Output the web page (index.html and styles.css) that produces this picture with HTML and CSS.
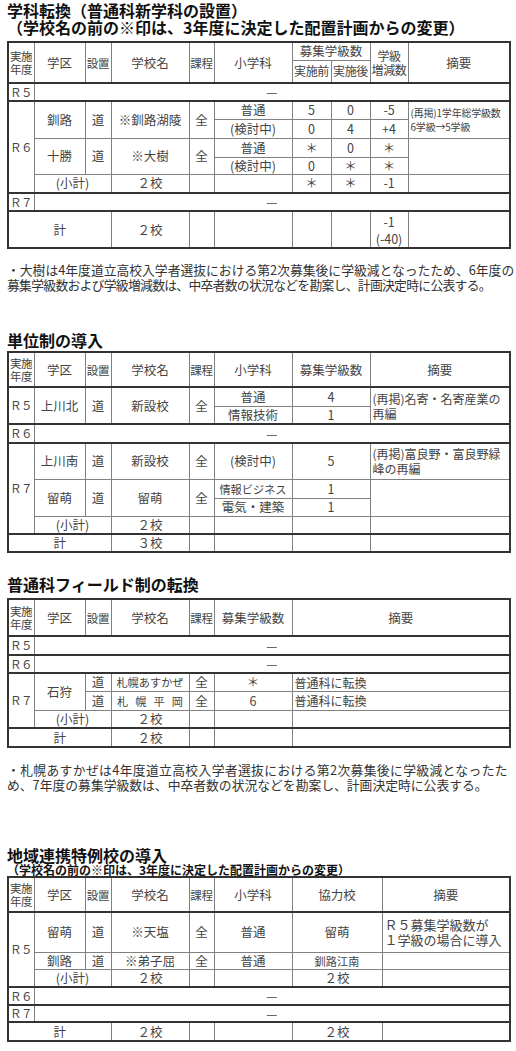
FILE: index.html
```html
<!DOCTYPE html>
<html lang="ja">
<head>
<meta charset="utf-8">
<title>配置計画</title>
<link rel="stylesheet" href="styles.css">
</head>
<body>
<div class="page">
  <h2 class="title">学科転換（普通科新学科の設置）<br>（学校名の前の※印は、3年度に決定した配置計画からの変更）</h2>
  <table class="t t1">
    <colgroup>
      <col class="w26"><col class="w51"><col class="w26"><col class="w78"><col class="w25"><col class="w78"><col class="w39"><col class="w39"><col class="w38"><col class="w102">
    </colgroup>
    <tr class="h18">
      <th rowspan="2" class="yr">実施<br>年度</th>
      <th rowspan="2">学区</th>
      <th rowspan="2" class="nw">設置</th>
      <th rowspan="2">学校名</th>
      <th rowspan="2" class="nw">課程</th>
      <th rowspan="2">小学科</th>
      <th colspan="2">募集学級数</th>
      <th rowspan="2" class="sm">学級<br>増減数</th>
      <th rowspan="2">摘要</th>
    </tr>
    <tr class="h23"><th class="sm">実施前</th><th class="sm">実施後</th></tr>
    <tr class="g h18"><td class="yr">Ｒ５</td><td colspan="9">—</td></tr>
    <tr class="g h18">
      <td rowspan="5" class="yr">Ｒ６</td>
      <td rowspan="2">釧路</td><td rowspan="2">道</td><td rowspan="2">※釧路湖陵</td><td rowspan="2">全</td>
      <td>普通</td><td>5</td><td>0</td><td>-5</td>
      <td rowspan="2" class="memo xs">(再掲)1学年総学級数<br>6学級→5学級</td>
    </tr>
    <tr class="h19"><td>(検討中)</td><td>0</td><td>4</td><td>+4</td></tr>
    <tr class="h19">
      <td rowspan="2">十勝</td><td rowspan="2">道</td><td rowspan="2">※大樹</td><td rowspan="2">全</td>
      <td>普通</td><td>＊</td><td>0</td><td>＊</td>
      <td rowspan="2"></td>
    </tr>
    <tr class="h17"><td>(検討中)</td><td>0</td><td>＊</td><td>＊</td></tr>
    <tr class="h19"><td colspan="2">(小計)</td><td>２校</td><td></td><td></td><td>＊</td><td>＊</td><td>-1</td><td></td></tr>
    <tr class="g h18"><td class="yr">Ｒ７</td><td colspan="9">—</td></tr>
    <tr class="g h37"><td colspan="3">計</td><td>２校</td><td></td><td></td><td></td><td></td><td class="two">-1<br>(-40)</td><td></td></tr>
  </table>
  <p class="note n1"><span class="l1">・大樹は4年度道立高校入学者選抜における第2次募集後に学級減となったため、6年度の</span><br><span class="l2">募集学級数および学級増減数は、中卒者数の状況などを勘案し、計画決定時に公表する。</span></p>

  <h2 class="title s2">単位制の導入</h2>
  <table class="t t2">
    <colgroup>
      <col class="w26"><col class="w51"><col class="w26"><col class="w78"><col class="w25"><col class="w78"><col class="w78"><col class="w140">
    </colgroup>
    <tr class="h35">
      <th class="yr">実施<br>年度</th><th>学区</th><th class="nw">設置</th><th>学校名</th><th class="nw">課程</th><th>小学科</th><th>募集学級数</th><th>摘要</th>
    </tr>
    <tr class="g h19">
      <td rowspan="2" class="yr">Ｒ５</td>
      <td rowspan="2">上川北</td><td rowspan="2">道</td><td rowspan="2">新設校</td><td rowspan="2">全</td>
      <td>普通</td><td>4</td>
      <td rowspan="2" class="memo">(再掲)名寄・名寄産業の<br>再編</td>
    </tr>
    <tr class="h18"><td>情報技術</td><td>1</td></tr>
    <tr class="g h19"><td class="yr">Ｒ６</td><td colspan="7">—</td></tr>
    <tr class="g h36">
      <td rowspan="4" class="yr">Ｒ７</td>
      <td>上川南</td><td>道</td><td>新設校</td><td>全</td><td>(検討中)</td><td>5</td>
      <td class="memo">(再掲)富良野・富良野緑<br>峰の再編</td>
    </tr>
    <tr class="h19">
      <td rowspan="2">留萌</td><td rowspan="2">道</td><td rowspan="2">留萌</td><td rowspan="2">全</td>
      <td class="nar">情報ビジネス</td><td>1</td><td rowspan="2"></td>
    </tr>
    <tr class="h18"><td>電気・建築</td><td>1</td></tr>
    <tr class="h18"><td colspan="2">(小計)</td><td>２校</td><td></td><td></td><td></td><td></td></tr>
    <tr class="g h18"><td colspan="3">計</td><td>３校</td><td></td><td></td><td></td><td></td></tr>
  </table>

  <h2 class="title s3">普通科フィールド制の転換</h2>
  <table class="t t3">
    <colgroup>
      <col class="w26"><col class="w51"><col class="w26"><col class="w78"><col class="w25"><col class="w78"><col class="w218">
    </colgroup>
    <tr class="h37">
      <th class="yr">実施<br>年度</th><th>学区</th><th class="nw">設置</th><th>学校名</th><th class="nw">課程</th><th>募集学級数</th><th>摘要</th>
    </tr>
    <tr class="g h19"><td class="yr">Ｒ５</td><td colspan="6">—</td></tr>
    <tr class="g h18"><td class="yr">Ｒ６</td><td colspan="6">—</td></tr>
    <tr class="g h18">
      <td rowspan="3" class="yr">Ｒ７</td>
      <td rowspan="2">石狩</td><td>道</td><td class="nar">札幌あすかぜ</td><td>全</td><td>＊</td>
      <td class="memo">普通科に転換</td>
    </tr>
    <tr class="h19"><td>道</td><td class="nar"><span class="spread">札幌平岡</span></td><td>全</td><td>6</td><td class="memo">普通科に転換</td></tr>
    <tr class="h18"><td colspan="2">(小計)</td><td>２校</td><td></td><td></td><td></td></tr>
    <tr class="g h19"><td colspan="3">計</td><td>２校</td><td></td><td></td><td></td></tr>
  </table>
  <p class="note n3"><span class="l1">・札幌あすかぜは4年度道立高校入学者選抜における第2次募集後に学級減となったた</span><br><span class="l2">め、7年度の募集学級数は、中卒者数の状況などを勘案し、計画決定時に公表する。</span></p>

  <h2 class="title s4">地域連携特例校の導入</h2>
  <p class="sub">（学校名の前の※印は、3年度に決定した配置計画からの変更）</p>
  <table class="t t4">
    <colgroup>
      <col class="w26"><col class="w51"><col class="w26"><col class="w78"><col class="w25"><col class="w78"><col class="w90"><col class="w128">
    </colgroup>
    <tr class="h35">
      <th class="yr">実施<br>年度</th><th>学区</th><th class="nw">設置</th><th>学校名</th><th class="nw">課程</th><th>小学科</th><th>協力校</th><th>摘要</th>
    </tr>
    <tr class="g h40">
      <td rowspan="3" class="yr">Ｒ５</td>
      <td>留萌</td><td>道</td><td>※天塩</td><td>全</td><td>普通</td><td>留萌</td>
      <td class="memo lg">Ｒ５募集学級数が<br>１学級の場合に導入</td>
    </tr>
    <tr class="h17"><td>釧路</td><td>道</td><td>※弟子屈</td><td>全</td><td>普通</td><td class="nar">釧路江南</td><td></td></tr>
    <tr class="h18"><td colspan="2">(小計)</td><td>２校</td><td></td><td></td><td>２校</td><td></td></tr>
    <tr class="g h18"><td class="yr">Ｒ６</td><td colspan="7">—</td></tr>
    <tr class="g h17"><td class="yr">Ｒ７</td><td colspan="7">—</td></tr>
    <tr class="g h19"><td colspan="3">計</td><td>２校</td><td></td><td></td><td>２校</td><td></td></tr>
  </table>
</div>
</body>
</html>
```

FILE: styles.css
```css
html, body {
  margin: 0;
  padding: 0;
  background: #fff;
}
body {
  font-family: "Noto Sans CJK JP", "Noto Sans", sans-serif;
  color: #333;
}
.page {
  padding: 2px 7px 0 7px;
  width: 502px;
}
.title {
  margin: 0;
  font-size: 16px;
  line-height: 17px;
  font-weight: 700;
  color: #111;
  white-space: nowrap;
}
.title.s2 { margin-top: 39px; line-height: 18px; }
.title.s3 { margin-top: 22px; line-height: 18px; }
.title.s4 { margin-top: 55px; line-height: 17px; }
.sub {
  margin: 0;
  font-size: 12px;
  line-height: 12px;
  font-weight: 700;
  color: #111;
  white-space: nowrap;
}

.t {
  border-collapse: collapse;
  table-layout: fixed;
  width: 502px;
  border: 2px solid #333;
  margin-top: 5px;
}
.t2 { margin-top: 2px; }
.t4 { margin-top: 0; }

.w25 { width: 25px; }
.w26 { width: 26px; }
.w38 { width: 38px; }
.w39 { width: 39px; }
.w51 { width: 51px; }
.w78 { width: 78px; }
.w90 { width: 90px; }
.w102 { width: 102px; }
.w128 { width: 128px; }
.w140 { width: 140px; }
.w218 { width: 218px; }

.t th, .t td {
  border: 1px solid #808080;
  padding: 0;
  font-size: 12.5px;
  font-weight: 400;
  line-height: 14px;
  text-align: center;
  vertical-align: middle;
  color: #444;
  white-space: nowrap;
  overflow: hidden;
}
.t tr.g > td,
.t tr.g > th {
  border-top: 2px solid #333;
}
.t .nw {
  font-size: 11.5px;
  letter-spacing: -0.3px;
}
.t .yr {
  text-align: left;
  font-size: 11.5px;
  line-height: 13px;
  padding-left: 1px;
  letter-spacing: -0.5px;
}
.t .sm {
  font-size: 12px;
  letter-spacing: -0.4px;
  line-height: 14px;
}
.t .two {
  line-height: 17px;
}
.t .memo {
  text-align: left;
  padding-left: 2px;
  font-size: 12px;
  line-height: 15px;
}
.t .memo.xs {
  font-size: 10px;
  line-height: 14px;
  letter-spacing: -0.2px;
}
.t .memo.lg {
  font-size: 13px;
  line-height: 15px;
}
.t .nar {
  font-size: 11.2px;
}
.spread {
  letter-spacing: 7px;
  margin-right: -7px;
}

.h16 { height: 16px; }
.h17 { height: 17px; }
.h18 { height: 18px; }
.h19 { height: 19px; }
.h23 { height: 23px; }
.h35 { height: 35px; }
.h36 { height: 36px; }
.h37 { height: 37px; }
.h40 { height: 40px; }
.h41 { height: 41px; }

.note {
  margin: 13px 0 0 0;
  font-size: 12.8px;
  line-height: 15px;
  color: #333;
  white-space: nowrap;
}
.n1 .l2 { letter-spacing: -0.7px; }
.n3 { margin-top: 14px; }
.n3 .l1 { letter-spacing: 0.35px; }
```
